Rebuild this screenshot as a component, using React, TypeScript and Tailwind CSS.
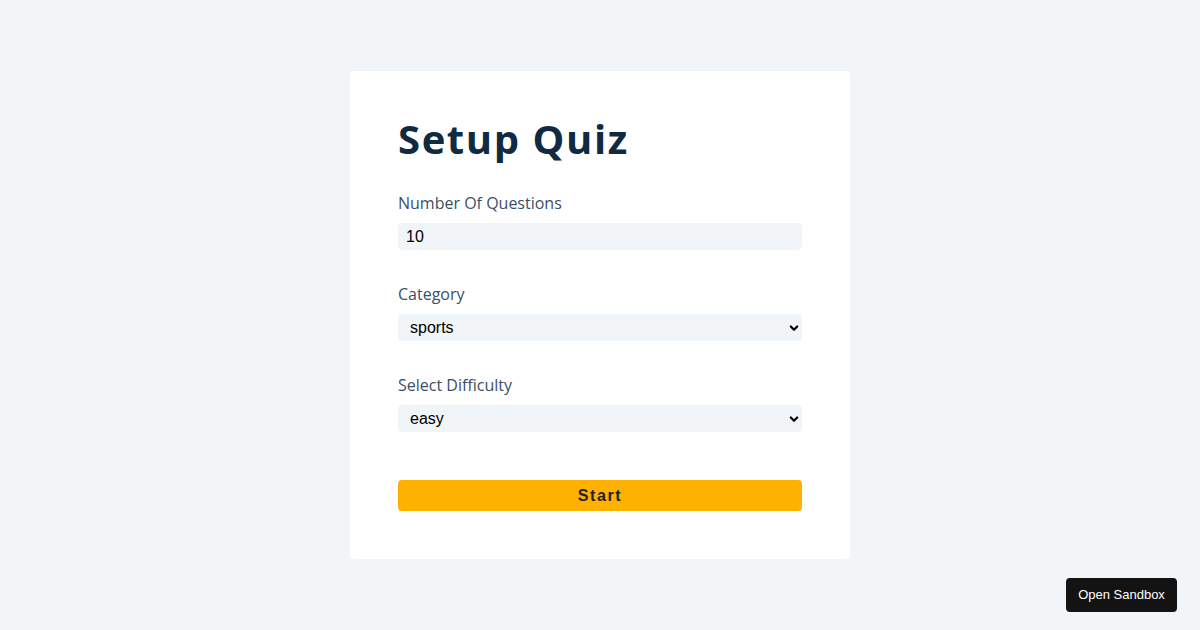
export default function App() {
  return (
    <main className="relative min-h-screen w-full bg-[#f1f5f8] font-['Open_Sans',sans-serif]">
      <div className="flex justify-center pt-[71px]">
        <section className="w-[500px] rounded bg-white p-12">
          <form onSubmit={(e) => e.preventDefault()}>
            <h2 className="mb-8 text-[40px] leading-[40px] font-bold tracking-[0.1rem] text-[#102a42]">
              Setup Quiz
            </h2>

            {/* amount */}
            <div className="mb-8">
              <label htmlFor="amount" className="mb-2 block text-base leading-6 text-[#3b4f66]">
                Number Of Questions
              </label>
              <input
                id="amount"
                type="number"
                defaultValue={10}
                className="block h-[27px] w-full rounded bg-[#f1f5f8] px-2 font-['Liberation_Sans',Arial,sans-serif] text-base text-black outline-none"
              />
            </div>

            {/* category */}
            <div className="mb-8">
              <label htmlFor="category" className="mb-2 block text-base leading-6 text-[#3b4f66]">
                Category
              </label>
              <div className="relative">
                <select
                  id="category"
                  defaultValue="sports"
                  className="block h-[27px] w-full appearance-none rounded bg-[#f1f5f8] px-3 font-['Liberation_Sans',Arial,sans-serif] text-base text-black outline-none"
                >
                  <option value="sports">sports</option>
                  <option value="history">history</option>
                  <option value="politics">politics</option>
                </select>
                <Chevron />
              </div>
            </div>

            {/* difficulty */}
            <div className="mb-8">
              <label htmlFor="difficulty" className="mb-2 block text-base leading-6 text-[#3b4f66]">
                Select Difficulty
              </label>
              <div className="relative">
                <select
                  id="difficulty"
                  defaultValue="easy"
                  className="block h-[27px] w-full appearance-none rounded bg-[#f1f5f8] px-3 font-['Liberation_Sans',Arial,sans-serif] text-base text-black outline-none"
                >
                  <option value="easy">easy</option>
                  <option value="medium">medium</option>
                  <option value="hard">hard</option>
                </select>
                <Chevron />
              </div>
            </div>

            <button
              type="submit"
              className="mt-12 block h-[31px] w-full rounded bg-[#ffb100] font-['Liberation_Sans',Arial,sans-serif] text-base font-bold tracking-[0.1rem] text-[#222]"
            >
              Start
            </button>
          </form>
        </section>
      </div>

      <button className="absolute right-[23px] bottom-[18px] h-[34px] w-[111px] rounded bg-[#131313] font-['Liberation_Sans',Arial,sans-serif] text-[13px] text-white">
        Open Sandbox
      </button>
    </main>
  );
}

function Chevron() {
  return (
    <svg
      className="pointer-events-none absolute top-1/2 right-[3px] h-[10px] w-[10px] -translate-y-1/2"
      viewBox="0 0 10 10"
      fill="none"
      stroke="#000"
      strokeWidth="2.2"
      strokeLinecap="round"
      strokeLinejoin="round"
    >
      <path d="M1.8 3.5 5 6.7l3.2-3.2" />
    </svg>
  );
}
